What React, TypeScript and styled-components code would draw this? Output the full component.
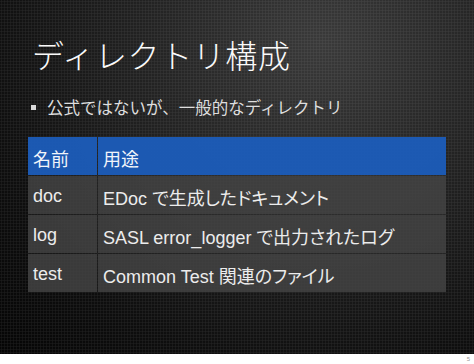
import React from "react";
import styled, { createGlobalStyle } from "styled-components";

const GlobalStyle = createGlobalStyle`
  html, body {
    margin: 0;
    padding: 0;
    background: #fff;
  }
  body {
    font-family: "Liberation Sans", "Noto Sans CJK JP", sans-serif;
  }
`;

const rows = [
  { name: "doc", use: "EDoc で生成したドキュメント" },
  { name: "log", use: "SASL error_logger で出力されたログ" },
  { name: "test", use: "Common Test 関連のファイル" },
];

export default function App() {
  return (
    <>
      <GlobalStyle />
      <Page>
        <Slide>
          <Title>ディレクトリ構成</Title>
          <Bullet>
            <Dot />
            公式ではないが、一般的なディレクトリ
          </Bullet>
          <Table>
            <Cell $head>名前</Cell>
            <Cell $head>用途</Cell>
            {rows.map((r) => (
              <React.Fragment key={r.name}>
                <Cell>{r.name}</Cell>
                <Cell>{r.use}</Cell>
              </React.Fragment>
            ))}
          </Table>
        </Slide>
        <Footer>5</Footer>
      </Page>
    </>
  );
}

const Page = styled.div`
  width: 474px;
  height: 364px;
  display: flex;
  flex-direction: column;
  overflow: hidden;
`;

const Slide = styled.div`
  height: 354px;
  box-sizing: border-box;
  padding: 38px 28px 0 28px;
  display: flex;
  flex-direction: column;
  background-color: #111;
  background-image:
    radial-gradient(circle at 50% 50%, rgba(255, 255, 255, 0.07) 0.8px, transparent 1.4px),
    radial-gradient(ellipse at 68% 12%, #3a3a3a 0%, #222 40%, #0e0e0e 75%, #050505 100%);
  background-size: 3px 3px, 100% 100%;
`;

const Title = styled.div`
  height: 32px;
  line-height: 32px;
  padding-left: 4px;
  color: #fafafa;
  font-family: "Noto Sans CJK JP", sans-serif;
  font-size: 32px;
  font-weight: 300;
  letter-spacing: 0.6px;
`;

const Bullet = styled.div`
  display: flex;
  align-items: center;
  margin-top: 27px;
  height: 20px;
  line-height: 20px;
  color: #dedede;
  font-family: "Noto Sans CJK JP", sans-serif;
  font-size: 16.5px;
  font-weight: 400;
`;

const Dot = styled.span`
  width: 5px;
  height: 5px;
  margin: 0 11px 0 3px;
  background: #d8d8d8;
`;

const Table = styled.div`
  margin-top: 20px;
  display: grid;
  grid-template-columns: 69px 348px;
  grid-auto-rows: 38px;
  gap: 1px;
`;

const Cell = styled.div<{ $head?: boolean }>`
  display: flex;
  align-items: center;
  box-sizing: border-box;
  padding: 3px 0 0 5px;
  color: ${(p) => (p.$head ? "#f0f4fa" : "#ececec")};
  background: ${(p) => (p.$head ? "rgba(28, 92, 184, 0.96)" : "rgba(68, 68, 68, 0.82)")};
  font-family: "Liberation Sans", "Noto Sans CJK JP", sans-serif;
  font-size: 18px;
  font-feature-settings: "palt";
  white-space: nowrap;
`;

const Footer = styled.div`
  height: 10px;
  background: #fff;
  display: flex;
  justify-content: flex-end;
  align-items: center;
  padding-right: 4px;
  color: #999;
  font-size: 6px;
  font-family: "Liberation Sans", sans-serif;
`;
